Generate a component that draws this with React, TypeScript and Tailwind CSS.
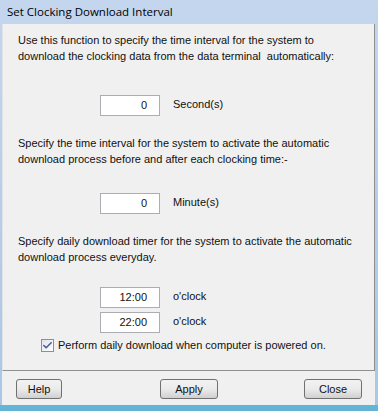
import { Check } from "lucide-react";

const font = { fontFamily: '"Liberation Sans", Arial, sans-serif' };

function Field({ value, label }: { value: string; label: string }) {
  return (
    <div className="flex items-center">
      <div className="w-[60px] h-[21px] bg-white border border-[#abadb3] flex items-end justify-end pr-[12px] pb-[2px] text-[11px] text-[#111]">
        {value}
      </div>
      <span className="ml-[13px] -mt-[4px] text-[11px] text-[#111]">{label}</span>
    </div>
  );
}

function Btn({ children, w }: { children: string; w: string }) {
  return (
    <button
      className={`${w} h-[20px] rounded-[3px] border border-[#707070] bg-gradient-to-b from-[#f2f2f2] via-[#ebebeb] to-[#d0d0d0] text-[11px] text-[#111] leading-none`}
    >
      {children}
    </button>
  );
}

export default function App() {
  return (
    <div
      style={font}
      className="w-[378px] h-[411px] flex flex-col bg-gradient-to-b from-[#c4d6ee] to-[#a9c6e6] pl-[2px] pr-[3px] pb-[6px] relative overflow-hidden"
    >
      <div
        className="h-[24px] flex items-center pl-[5px] text-[11.5px] text-black"
        style={{ fontFamily: '"Open Sans", "Liberation Sans", sans-serif' }}
      >
        Set Clocking Download Interval
      </div>
      <div className="flex-1 flex flex-col bg-[#f0f0f0]">
        <div className="h-[347px] border-r border-b border-[#8e8f8f] border-l border-l-[#e3e3e3] px-[15px] pt-[8px] text-[11px] text-[#111] leading-[16px] whitespace-nowrap">
          <p>Use this function to specify the time interval for the system to</p>
          <p>download the clocking data from the data terminal&nbsp; automatically:</p>
          <div className="pl-[82px] mt-[31px]">
            <Field value="0" label="Second(s)" />
          </div>
          <p className="mt-[19px]">Specify the time interval for the system to activate the automatic</p>
          <p>download process before and after each clocking time:-</p>
          <div className="pl-[82px] mt-[26px]">
            <Field value="0" label="Minute(s)" />
          </div>
          <p className="mt-[19px]">Specify daily download timer for the system to activate the automatic</p>
          <p>download process everyday.</p>
          <div className="pl-[82px] mt-[22px] flex flex-col gap-[4px]">
            <Field value="12:00" label="o'clock" />
            <Field value="22:00" label="o'clock" />
          </div>
          <div className="flex items-center pl-[23px] mt-[4px]">
            <span className="w-[13px] h-[13px] border border-[#8f8f8f] bg-gradient-to-br from-[#dfe3ea] to-white flex items-center justify-center">
              <Check className="w-[11px] h-[11px] text-[#4a5f97]" strokeWidth={3.5} />
            </span>
            <span className="ml-[4px]">Perform daily download when computer is powered on.</span>
          </div>
        </div>
        <div className="flex-1 flex items-start pl-[14px] pt-[8px]">
          <Btn w="w-[46px]">Help</Btn>
          <span className="ml-[98px] flex"><Btn w="w-[58px]">Apply</Btn></span>
          <span className="ml-[86px] flex"><Btn w="w-[58px]">Close</Btn></span>
        </div>
      </div>
      <div className="absolute left-0 right-0 bottom-0 h-[6px] bg-[#62b5d6]" />
    </div>
  );
}
